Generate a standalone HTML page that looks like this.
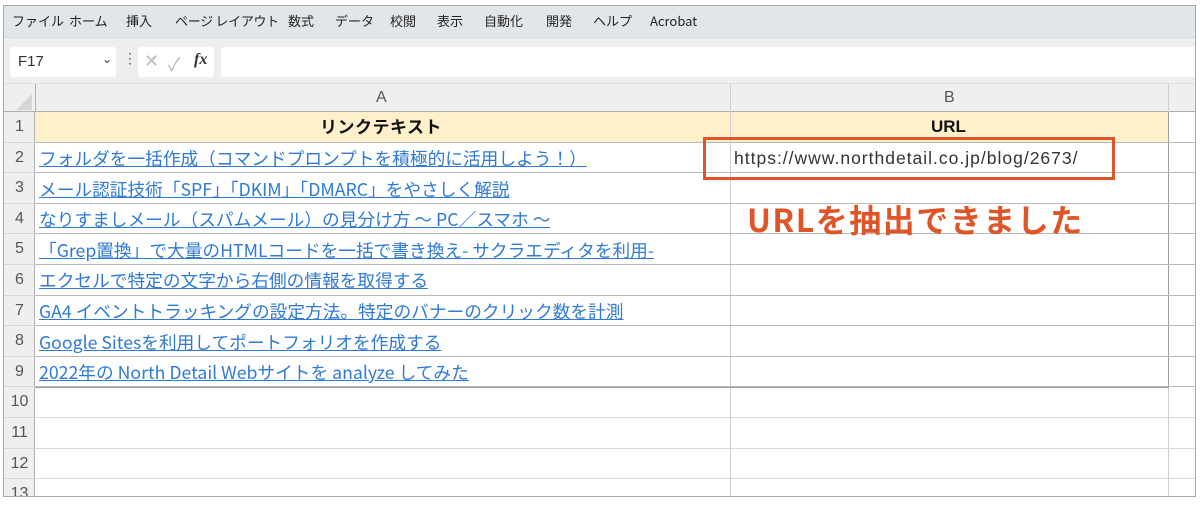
<!DOCTYPE html>
<html><head><meta charset="utf-8"><style>
*{margin:0;padding:0;box-sizing:border-box}
body{width:1200px;height:512px;background:#fff;position:relative;overflow:hidden;font-family:"Liberation Sans","Noto Sans CJK JP",sans-serif}
.frame{position:absolute;left:3px;top:5px;width:1193px;height:492px;border:1px solid #a8a8a8;background:#fff;overflow:hidden}
.menu{position:absolute;left:0;top:0;width:100%;height:31px;background:#e3e6e8;font-size:13px;color:#222;font-family:"Noto Sans CJK JP",sans-serif}
.menu span{position:absolute;top:5px;white-space:nowrap}
.fbar{position:absolute;left:0;top:31px;width:100%;height:46px;background:#eceef0;border-top:1px solid #d8dadc}
.box{position:absolute;background:#fff;border-radius:3px;top:9px;height:30px}
.colh{position:absolute;top:77px;left:0;width:100%;height:29px;background:#efefef;border-bottom:1px solid #b0b0b0;border-top:1px solid #e0e0e0}
.rowh{position:absolute;left:0;top:106px;width:31px;height:400px;background:#efefef;border-right:1px solid #b0b0b0}
.rn{position:absolute;left:0;width:31px;text-align:center;font-size:16px;color:#555;border-bottom:1px solid #d8d8d8}
.hl{position:absolute;left:31px;width:1162px;border-bottom:1px solid #dadada}
.a{position:absolute;left:35px;font-size:17.7px;line-height:26px;color:#2f7ad6;text-decoration:underline;white-space:nowrap;font-family:"Noto Sans CJK JP",sans-serif}
</style></head><body>
<div class="frame">
<div class="menu">
<span style="left:8px">ファイル</span><span style="left:65px">ホーム</span><span style="left:122px">挿入</span><span style="left:171px;letter-spacing:-0.3px">ページ レイアウト</span><span style="left:284px">数式</span><span style="left:331px">データ</span><span style="left:386px">校閲</span><span style="left:433px">表示</span><span style="left:480px">自動化</span><span style="left:542px">開発</span><span style="left:589px">ヘルプ</span><span style="left:646px">Acrobat</span>
</div>
<div class="fbar">
<div class="box" style="left:6px;width:106px"><span style="position:absolute;left:8px;top:6px;font-size:15px;color:#333">F17</span><span style="position:absolute;left:92px;top:5px;font-size:12px;color:#333">⌄</span></div>
<span style="position:absolute;left:119px;top:12px;font-size:14px;color:#555">⋮</span>
<div class="box" style="left:134px;width:76px"><span style="position:absolute;left:6px;top:4px;font-size:18px;color:#bbb">✕</span><span style="position:absolute;left:30px;top:4px;font-size:18px;color:#bbb">✓</span><span style="position:absolute;left:56px;top:4px;font-size:16px;color:#333;font-style:italic;font-family:'Liberation Serif',serif;font-weight:bold">fx</span></div>
<div class="box" style="left:217px;width:980px"></div>
</div>
<div class="colh">
<div style="position:absolute;left:31px;top:0;width:1px;height:28px;background:#b0b0b0"></div>
<div style="position:absolute;left:726px;top:0;width:1px;height:28px;background:#d0d0d0"></div>
<div style="position:absolute;left:1164px;top:0;width:1px;height:28px;background:#d0d0d0"></div>
<span style="position:absolute;left:372px;top:5px;font-size:16px;color:#555">A</span>
<span style="position:absolute;left:940px;top:5px;font-size:16px;color:#555">B</span>
<div style="position:absolute;left:12px;top:10px;width:0;height:0;border-left:16px solid transparent;border-bottom:16px solid #d6d6d6"></div>
</div>
<div style="position:absolute;left:31px;top:106px;width:1133px;height:30px;background:#fff0cc"></div>
<div style="position:absolute;left:726px;top:106px;width:1px;height:400px;background:#d0d0d0"></div>
<div style="position:absolute;left:1164px;top:106px;width:1px;height:400px;background:#d0d0d0"></div>
<div class="rowh"></div>
<div style="position:absolute;left:31px;top:106px;width:1134px;height:276px;border-right:1px solid #a0a0a0;border-bottom:1px solid #a0a0a0"></div>
<div id="rows"></div>
<div style="position:absolute;left:316px;top:107px;font-size:17px;line-height:26px;font-weight:bold;color:#111;font-family:'Noto Sans CJK JP',sans-serif;letter-spacing:0.5px">リンクテキスト</div>
<div style="position:absolute;left:927px;top:108px;font-size:17px;line-height:26px;font-weight:bold;color:#111">URL</div>
<div style="position:absolute;left:730px;top:139px;font-size:17.5px;line-height:26px;color:#333;letter-spacing:1px;white-space:nowrap">https://www.northdetail.co.jp/blog/2673/</div>
<div style="position:absolute;left:699px;top:131px;width:412px;height:43px;border:3px solid #de5528"></div>
<div style="position:absolute;left:743px;top:192px;font-size:32px;line-height:42px;font-weight:bold;color:#de5528;font-family:'Noto Sans CJK JP',sans-serif;letter-spacing:1.5px;white-space:nowrap">URLを抽出できました</div>
<div class="a" style="top:139px">フォルダを一括作成（コマンドプロンプトを積極的に活用しよう！）</div>
<div class="a" style="top:169.6px">メール認証技術「SPF」「DKIM」「DMARC」をやさしく解説</div>
<div class="a" style="top:200.2px">なりすましメール（スパムメール）の見分け方 ～ PC／スマホ ～</div>
<div class="a" style="top:230.8px">「Grep置換」で大量のHTMLコードを一括で書き換え- サクラエディタを利用-</div>
<div class="a" style="top:261.4px">エクセルで特定の文字から右側の情報を取得する</div>
<div class="a" style="top:292px">GA4 イベントトラッキングの設定方法。特定のバナーのクリック数を計測</div>
<div class="a" style="top:322.6px">Google Sitesを利用してポートフォリオを作成する</div>
<div class="a" style="top:353.2px">2022年の North Detail Webサイトを analyze してみた</div>
<script>
var h='';var r=document.getElementById('rows');
for(var i=0;i<13;i++){var t=106+i*30.6;
h+='<div class="hl" style="top:'+t+'px;height:30.6px;'+(i<9?'border-bottom-color:#b8b8b8':'')+'"></div>';
h+='<div class="rn" style="top:'+t+'px;height:30.6px;line-height:30px">'+(i+1)+'</div>';}
r.innerHTML=h;
</script>
</div>
</body></html>
